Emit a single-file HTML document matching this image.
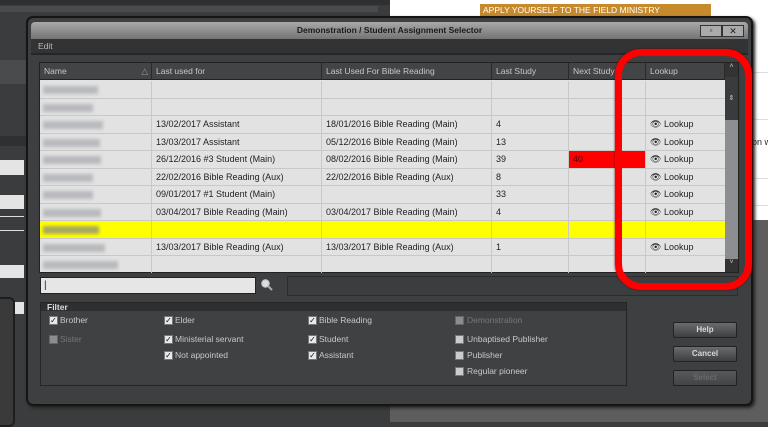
<!DOCTYPE html>
<html><head><style>
*{margin:0;padding:0;box-sizing:border-box}
body{width:768px;height:422px;overflow:hidden;background:#3b3c3d;position:relative;font-family:"Liberation Sans","DejaVu Sans",sans-serif;font-size:9px;color:#222}
.a{position:absolute}
.row{position:absolute;left:40px;width:685px;height:17.5px;border-bottom:1px solid #c8c8c8;background:#e2e2e2}
.c{position:absolute;top:0;height:17px;line-height:17px;padding-left:4px;border-right:1px solid #c8c8c8;white-space:nowrap}
.blur{position:absolute;left:3px;top:5px;height:8px;background:#b8babd;filter:blur(1.5px)}
.hd{position:absolute;top:0;height:17px;line-height:17px;padding-left:4px;color:#c8c8c8;border-right:1px solid #2a2a2a;font-size:8.5px}
.cb{position:absolute;width:9px;height:9px;background:#e8e8e8;border:1px solid #777;font-size:8px;line-height:7px;text-align:center;color:#111}
.lb{position:absolute;color:#c9c9c9;font-size:8.5px;white-space:nowrap}
.btn{position:absolute;left:673px;width:64px;height:16px;border:1px solid #222;border-radius:2px;background:linear-gradient(#6a6b6d,#3e3f41);color:#d8d8d8;font-weight:bold;font-size:8px;text-align:center;line-height:14px}
.eye{font-size:9px}
</style></head><body>
<div class="a" style="left:0;top:0;width:390px;height:5px;background:#2e2f30"></div>
<div class="a" style="left:0;top:6px;width:378px;height:6px;background:#4a4b4c"></div>
<div class="a" style="left:0;top:60px;width:60px;height:24px;background:#4a4b4c"></div>
<div class="a" style="left:0;top:136px;width:30px;height:10px;background:#2f3031"></div>
<div class="a" style="left:0;top:160px;width:24px;height:15px;background:#e4e4e4"></div>
<div class="a" style="left:0;top:195px;width:24px;height:14px;background:#e4e4e4"></div>
<div class="a" style="left:0;top:216px;width:24px;height:1px;background:#ddd"></div>
<div class="a" style="left:0;top:230px;width:24px;height:1px;background:#ddd"></div>
<div class="a" style="left:0;top:265px;width:24px;height:13px;background:#e4e4e4"></div>
<div class="a" style="left:0;top:302px;width:24px;height:12px;background:#e4e4e4"></div>
<div class="a" style="left:-5px;top:297px;width:20px;height:130px;border:2px solid #1e1e1e;border-radius:6px;background:#3a3a3a"></div>
<div class="a" style="left:390px;top:0;width:378px;height:220px;background:#fff"></div>
<div class="a" style="left:390px;top:220px;width:378px;height:202px;background:#5d5d5d"></div>
<div class="a" style="left:752px;top:72px;width:16px;height:1px;background:#ddd"></div>
<div class="a" style="left:752px;top:119px;width:16px;height:1px;background:#ddd"></div>
<div class="a" style="left:752px;top:178px;width:16px;height:1px;background:#ddd"></div>
<div class="a" style="left:752px;top:205px;width:16px;height:1px;background:#ddd"></div>
<div class="a" style="left:752px;top:137px;color:#222;font-size:9px;white-space:nowrap">on w</div>
<div class="a" style="left:480px;top:4px;width:231px;height:12px;background:#c68a2c;color:#fff;font-size:8.5px;line-height:12px;padding-left:3px">APPLY YOURSELF TO THE FIELD MINISTRY</div>
<div class="a" style="left:26px;top:16px;width:727px;height:390px;background:#3e3f41;border:2px solid #151515;border-radius:7px;box-shadow:2px 2px 3px #222"></div>
<div class="a" style="left:31px;top:22px;width:717px;height:17px;background:linear-gradient(#a8a8a8,#747474);border-radius:4px 4px 0 0;text-align:center;font-weight:bold;font-size:8.5px;line-height:17px;color:#1a1a1a">Demonstration / Student Assignment Selector</div>
<div class="a" style="left:700px;top:25px;width:22px;height:12px;border:1px solid #333;background:#aaa;font-size:8px;text-align:center;line-height:10px">▫</div>
<div class="a" style="left:722px;top:25px;width:22px;height:12px;border:1px solid #333;background:#aaa;font-size:9px;text-align:center;line-height:10px;font-weight:bold">✕</div>
<div class="a" style="left:31px;top:39px;width:717px;height:14px;background:#323334;color:#bbb;font-size:8.5px;line-height:14px;padding-left:7px">Edit</div>
<div class="a" style="left:31px;top:53px;width:717px;height:2px;background:#262626"></div>
<div class="a" style="left:39px;top:62px;width:700px;height:211px;background:#e2e2e2;border:1px solid #222"></div>
<div class="a" style="left:40px;top:63px;width:685px;height:17px;background:#434446;border-bottom:1px solid #222">
<div class="hd" style="left:0;width:112px">Name<span style="position:absolute;right:3px;color:#999">△</span></div>
<div class="hd" style="left:112px;width:170px">Last used for</div>
<div class="hd" style="left:282px;width:170px">Last Used For Bible Reading</div>
<div class="hd" style="left:452px;width:77px">Last Study</div>
<div class="hd" style="left:529px;width:77px">Next Study</div>
<div class="hd" style="left:606px;width:79px">Lookup</div>
</div>
<div class="a" style="left:725px;top:63px;width:13px;height:209px;background:#8c8e92"></div>
<div class="a" style="left:725px;top:63px;width:13px;height:14px;background:#333;color:#ccc;font-size:7px;text-align:center">˄</div>
<div class="a" style="left:725px;top:77px;width:13px;height:43px;background:#3a3b3d;color:#ccc;font-size:7px;text-align:center;line-height:43px">⇕</div>
<div class="a" style="left:725px;top:259px;width:13px;height:13px;background:#333;color:#ccc;font-size:7px;text-align:center">˅</div>

<div class="row" style="top:81px"><div class="c" style="left:0;width:112px"><div class="blur" style="width:55px"></div></div><div class="c" style="left:112px;width:170px"></div><div class="c" style="left:282px;width:170px"></div><div class="c" style="left:452px;width:77px"></div><div class="c" style="left:529px;width:77px"></div></div>
<div class="row" style="top:98.5px"><div class="c" style="left:0;width:112px"><div class="blur" style="width:50px"></div></div><div class="c" style="left:112px;width:170px"></div><div class="c" style="left:282px;width:170px"></div><div class="c" style="left:452px;width:77px"></div><div class="c" style="left:529px;width:77px"></div></div>
<div class="row" style="top:116px"><div class="c" style="left:0;width:112px"><div class="blur" style="width:60px"></div></div><div class="c" style="left:112px;width:170px">13/02/2017 Assistant</div><div class="c" style="left:282px;width:170px">18/01/2016 Bible Reading (Main)</div><div class="c" style="left:452px;width:77px">4</div><div class="c" style="left:529px;width:77px"></div><div class="c" style="left:606px;border:none"><span class="eye">👁</span> Lookup</div></div>
<div class="row" style="top:133.5px"><div class="c" style="left:0;width:112px"><div class="blur" style="width:57px"></div></div><div class="c" style="left:112px;width:170px">13/03/2017 Assistant</div><div class="c" style="left:282px;width:170px">05/12/2016 Bible Reading (Main)</div><div class="c" style="left:452px;width:77px">13</div><div class="c" style="left:529px;width:77px"></div><div class="c" style="left:606px;border:none"><span class="eye">👁</span> Lookup</div></div>
<div class="row" style="top:151px"><div class="c" style="left:0;width:112px"><div class="blur" style="width:58px"></div></div><div class="c" style="left:112px;width:170px">26/12/2016 #3 Student (Main)</div><div class="c" style="left:282px;width:170px">08/02/2016 Bible Reading (Main)</div><div class="c" style="left:452px;width:77px">39</div><div class="c" style="left:529px;width:77px;background:#f00;color:#400">40</div><div class="c" style="left:606px;border:none"><span class="eye">👁</span> Lookup</div></div>
<div class="row" style="top:168.5px"><div class="c" style="left:0;width:112px"><div class="blur" style="width:50px"></div></div><div class="c" style="left:112px;width:170px">22/02/2016 Bible Reading (Aux)</div><div class="c" style="left:282px;width:170px">22/02/2016 Bible Reading (Aux)</div><div class="c" style="left:452px;width:77px">8</div><div class="c" style="left:529px;width:77px"></div><div class="c" style="left:606px;border:none"><span class="eye">👁</span> Lookup</div></div>
<div class="row" style="top:186px"><div class="c" style="left:0;width:112px"><div class="blur" style="width:50px"></div></div><div class="c" style="left:112px;width:170px">09/01/2017 #1 Student (Main)</div><div class="c" style="left:282px;width:170px"></div><div class="c" style="left:452px;width:77px">33</div><div class="c" style="left:529px;width:77px"></div><div class="c" style="left:606px;border:none"><span class="eye">👁</span> Lookup</div></div>
<div class="row" style="top:203.5px"><div class="c" style="left:0;width:112px"><div class="blur" style="width:58px"></div></div><div class="c" style="left:112px;width:170px">03/04/2017 Bible Reading (Main)</div><div class="c" style="left:282px;width:170px">03/04/2017 Bible Reading (Main)</div><div class="c" style="left:452px;width:77px">4</div><div class="c" style="left:529px;width:77px"></div><div class="c" style="left:606px;border:none"><span class="eye">👁</span> Lookup</div></div>
<div class="row" style="top:221px;background:#ffff00"><div class="c" style="left:0;width:112px"><div class="blur" style="width:56px;background:#a8a860"></div></div><div class="c" style="left:112px;width:170px"></div><div class="c" style="left:282px;width:170px"></div><div class="c" style="left:452px;width:77px"></div><div class="c" style="left:529px;width:77px"></div></div>
<div class="row" style="top:238.5px"><div class="c" style="left:0;width:112px"><div class="blur" style="width:62px"></div></div><div class="c" style="left:112px;width:170px">13/03/2017 Bible Reading (Aux)</div><div class="c" style="left:282px;width:170px">13/03/2017 Bible Reading (Aux)</div><div class="c" style="left:452px;width:77px">1</div><div class="c" style="left:529px;width:77px"></div><div class="c" style="left:606px;border:none"><span class="eye">👁</span> Lookup</div></div>
<div class="row" style="top:256px;height:16px;border:none"><div class="c" style="left:0;width:112px"><div class="blur" style="width:75px"></div></div><div class="c" style="left:112px;width:170px"></div><div class="c" style="left:282px;width:170px"></div><div class="c" style="left:452px;width:77px"></div><div class="c" style="left:529px;width:77px"></div></div>

<div class="a" style="left:40px;top:277px;width:216px;height:17px;background:#e6e6e6;border:1px solid #222;padding-left:3px;line-height:15px;font-size:10px">|</div>
<svg class="a" style="left:260px;top:278px" width="14" height="14"><circle cx="5.5" cy="5.5" r="3.5" fill="#dde" stroke="#ccc" stroke-width="1.5"/><line x1="8" y1="8" x2="12" y2="12" stroke="#aaa" stroke-width="2"/></svg>
<div class="a" style="left:287px;top:276px;width:451px;height:20px;border:1px solid #2c2c2c;background:#3c3d3f"></div>
<div class="a" style="left:40px;top:302px;width:587px;height:84px;border:1px solid #252525;background:#404143"></div>
<div class="a" style="left:41px;top:303px;width:585px;height:8px;background:#2e2f30;color:#ddd;font-weight:bold;font-size:8.5px;line-height:8px;padding-left:6px">Filter</div>
<div class="cb" style="left:49px;top:316px">✓</div><div class="lb" style="left:60px;top:315px">Brother</div>
<div class="cb" style="left:49px;top:335px;background:#8a8d92;border-color:#666"></div><div class="lb" style="left:60px;top:334px;color:#777">Sister</div>
<div class="cb" style="left:164px;top:316px">✓</div><div class="lb" style="left:175px;top:315px">Elder</div>
<div class="cb" style="left:164px;top:335px">✓</div><div class="lb" style="left:175px;top:334px">Ministerial servant</div>
<div class="cb" style="left:164px;top:351px">✓</div><div class="lb" style="left:175px;top:350px">Not appointed</div>
<div class="cb" style="left:308px;top:316px">✓</div><div class="lb" style="left:319px;top:315px">Bible Reading</div>
<div class="cb" style="left:308px;top:335px">✓</div><div class="lb" style="left:319px;top:334px">Student</div>
<div class="cb" style="left:308px;top:351px">✓</div><div class="lb" style="left:319px;top:350px">Assistant</div>
<div class="cb" style="left:455px;top:316px;background:#8a8d92;border-color:#666"></div><div class="lb" style="left:467px;top:315px;color:#777">Demonstration</div>
<div class="cb" style="left:455px;top:335px;background:#ccc"></div><div class="lb" style="left:467px;top:334px">Unbaptised Publisher</div>
<div class="cb" style="left:455px;top:351px;background:#ccc"></div><div class="lb" style="left:467px;top:350px">Publisher</div>
<div class="cb" style="left:455px;top:367px;background:#ccc"></div><div class="lb" style="left:467px;top:366px">Regular pioneer</div>
<div class="btn" style="top:322px">Help</div>
<div class="btn" style="top:346px">Cancel</div>
<div class="btn" style="top:370px;color:#6a6a6a;background:linear-gradient(#58595b,#434446)">Select</div>
<div class="a" style="left:615px;top:49px;width:137px;height:241px;border:7px solid #f00;border-radius:26px;box-shadow:0 0 2px #600"></div>
</body></html>
